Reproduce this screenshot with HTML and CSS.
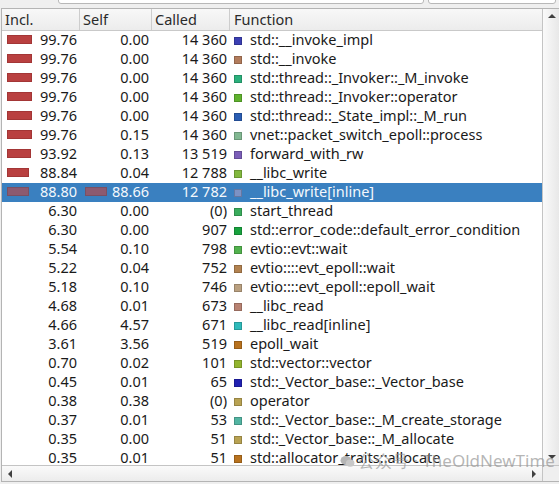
FILE: index.html
```html
<!DOCTYPE html>
<html>
<head>
<meta charset="utf-8">
<link rel="stylesheet" href="styles.css">
</head>
<body>
<div class="top">
  <div class="field f1"></div>
  <div class="field f2"></div>
</div>
<div class="view">
  <div class="table">
    <div class="head">
      <div class="hc c1">Incl.</div>
      <div class="hc c2">Self</div>
      <div class="hc c3">Called</div>
      <div class="hc c4">Function</div>
    </div>
    <div class="rows" id="rows"></div>
  </div>
  <div class="vscroll">
    <div class="arrow up"></div>
    <div class="vtrack"></div>
    <div class="arrow down"></div>
  </div>
  <div class="hscroll">
    <div class="harrow left"></div>
    <div class="htrack"><div class="hthumb"></div></div>
    <div class="harrow right"></div>
  </div>
  <div class="corner"></div>
</div>
<div class="mark"><span class="wx"><svg width="15" height="13" viewBox="0 0 14 12"><ellipse cx="5.5" cy="5" rx="5" ry="4.2" fill="#b5b5b5"/><ellipse cx="9.5" cy="7.5" rx="4" ry="3.4" fill="#c8c8c8"/></svg></span>公众号 · TheOldNewTime</div>
<script src="app.js"></script>
</body>
</html>
```
FILE: app.js
```js
var data = [
["99.76","0.00","14 360","#3b3fb3","std::__invoke_impl"],
["99.76","0.00","14 360","#b27c5c","std::__invoke"],
["99.76","0.00","14 360","#2bb07c","std::thread::_Invoker::_M_invoke"],
["99.76","0.00","14 360","#5fb22e","std::thread::_Invoker::operator"],
["99.76","0.00","14 360","#2a5db3","std::thread::_State_impl::_M_run"],
["99.76","0.15","14 360","#82b892","vnet::packet_switch_epoll::process"],
["93.92","0.13","13 519","#7b5eb8","forward_with_rw"],
["88.84","0.04","12 788","#82b83e","__libc_write"],
["88.80","88.66","12 782","#7d92c4","__libc_write[inline]"],
["6.30","0.00","(0)","#3aac5c","start_thread"],
["6.30","0.00","907","#18a23e","std::error_code::default_error_condition"],
["5.54","0.10","798","#52b24e","evtio::evt::wait"],
["5.22","0.04","752","#b28250","evtio::::evt_epoll::wait"],
["5.18","0.10","746","#baa080","evtio::::evt_epoll::epoll_wait"],
["4.68","0.01","673","#b88272","__libc_read"],
["4.66","4.57","671","#2fbaba","__libc_read[inline]"],
["3.61","3.56","519","#b8721e","epoll_wait"],
["0.70","0.02","101","#92b42e","std::vector::vector"],
["0.45","0.01","65","#2020b2","std::_Vector_base::_Vector_base"],
["0.38","0.38","(0)","#b8a252","operator"],
["0.37","0.01","53","#52b4a2","std::_Vector_base::_M_create_storage"],
["0.35","0.00","51","#b8a252","std::_Vector_base::_M_allocate"],
["0.35","0.01","51","#b8721e","std::allocator_traits::allocate"]
];
var rows = document.getElementById("rows");
data.forEach(function (d, i) {
  var r = document.createElement("div");
  r.className = "row" + (i === 8 ? " sel" : "");
  function cell(cls, val, pct) {
    var c = document.createElement("div");
    c.className = "cell " + cls;
    if (pct > 50) {
      var b = document.createElement("span");
      b.className = "bar";
      b.style.width = Math.round(23 * pct / 100) + "px";
      c.appendChild(b);
    }
    var t = document.createElement("span");
    t.className = "num";
    t.textContent = val;
    c.appendChild(t);
    return c;
  }
  r.appendChild(cell("c1", d[0], parseFloat(d[0])));
  r.appendChild(cell("c2", d[1], parseFloat(d[1])));
  r.appendChild(cell("c3", d[2], 0));
  var f = document.createElement("div");
  f.className = "cell c4";
  var sq = document.createElement("span");
  sq.className = "sq";
  sq.style.background = d[3];
  f.appendChild(sq);
  var n = document.createElement("span");
  n.textContent = d[4];
  f.appendChild(n);
  r.appendChild(f);
  rows.appendChild(r);
});
```
FILE: styles.css
```css
html, body { margin: 0; padding: 0; }
body {
  width: 559px;
  height: 484px;
  background: #efefef;
  font-family: "Noto Sans", "DejaVu Sans", sans-serif;
  font-size: 14.5px;
  color: #1a1a1a;
  overflow: hidden;
  position: relative;
}
.top { height: 8px; position: relative; }
.field {
  position: absolute;
  top: -6px;
  height: 8px;
  background: #fff;
  border: 1px solid #b8b8b8;
  border-radius: 3px;
}
.f1 { left: 58px; width: 364px; }
.f2 { left: 428px; width: 126px; }
.view {
  display: grid;
  grid-template-columns: 540px 17px;
  grid-template-rows: 456px 16px;
  border: 1px solid #b4b4b4;
  margin-left: 1px;
  background: #fff;
  width: 557px;
}
.table { overflow: hidden; background: #fff; }
.head {
  display: flex;
  height: 21px;
  border-bottom: 1px solid #c9c9c9;
  background: linear-gradient(#f8f8f8, #ececec);
}
.hc {
  box-sizing: border-box;
  padding-left: 3px;
  line-height: 20px;
  border-right: 1px solid #cdcdcd;
  color: #2a2a2a;
}
.c1 { width: 78px; flex: none; }
.c2 { width: 72px; flex: none; }
.c3 { width: 78px; flex: none; }
.c4 { flex: 1; border-right: none; }
.row { display: flex; height: 19px; line-height: 19px; }
.row.sel { background: #3a80c0; color: #f4f8fc; }
.cell {
  box-sizing: border-box;
  display: flex;
  align-items: center;
  white-space: nowrap;
  padding-bottom: 2px;
}
.c1, .c2, .c3 { justify-content: flex-end; padding-right: 3px; }
.row .c1, .row .c2 { position: relative; }
.bar {
  position: absolute;
  left: 5px;
  top: 4px;
  height: 7px;
  background: #b94040;
  border: 1px solid #a33636;
  box-sizing: content-box;
}
.row.sel .bar { background: #8c5a70; border-color: #7a5063; }
.c4 { padding-left: 4px; }
.sq {
  display: inline-block;
  width: 8px;
  height: 8px;
  margin: 2px 8px 0 0;
  box-sizing: border-box;
  border: 1px solid rgba(0,0,0,0.18);
}
.vscroll {
  display: flex;
  flex-direction: column;
  border-left: 1px solid #c4c4c4;
  background: linear-gradient(90deg, #fafafa, #e8e8e8);
}
.arrow { height: 16px; position: relative; }
.arrow::after {
  content: "";
  position: absolute;
  left: 5px;
  border-left: 4px solid transparent;
  border-right: 4px solid transparent;
}
.up::after { top: 5px; border-bottom: 4px solid #404040; }
.down::after { top: 6px; border-top: 4px solid #404040; }
.vtrack { flex: 1; }
.hscroll {
  display: flex;
  border-top: 1px solid #c4c4c4;
  background: linear-gradient(#fafafa, #ececec);
}
.harrow { width: 16px; position: relative; flex: none; }
.harrow::after {
  content: "";
  position: absolute;
  top: 4px;
  border-top: 4px solid transparent;
  border-bottom: 4px solid transparent;
}
.left::after { left: 6px; border-right: 4px solid #404040; }
.right::after { left: 6px; border-left: 4px solid #404040; }
.htrack { flex: 1; position: relative; }
.hthumb { width: 330px; height: 100%; }
.corner { background: #efefef; border-left: 1px solid #c4c4c4; border-top: 1px solid #c4c4c4; }
.mark {
  position: absolute;
  left: 340px;
  top: 449px;
  font-size: 17px;
  color: rgba(150,150,150,0.7);
  white-space: nowrap;
  display: flex;
  align-items: center;
  gap: 3px;
}
```
